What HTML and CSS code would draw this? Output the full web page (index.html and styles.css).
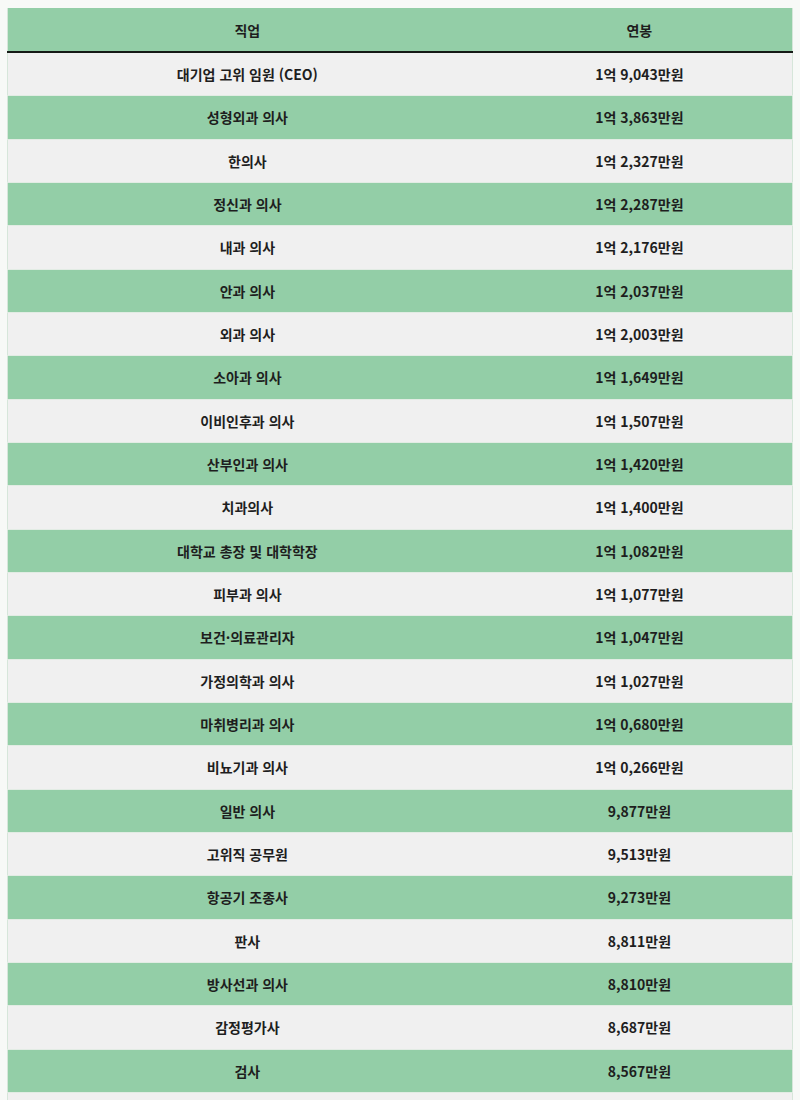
FILE: index.html
```html
<!DOCTYPE html>
<html lang="ko">
<head>
<meta charset="utf-8">
<link rel="stylesheet" href="styles.css">
</head>
<body>
<table class="salary">
<thead>
<tr><th class="c1">직업</th><th class="c2">연봉</th></tr>
</thead>
<tbody>
<tr><td>대기업 고위 임원 (CEO)</td><td>1억 9,043만원</td></tr>
<tr><td>성형외과 의사</td><td>1억 3,863만원</td></tr>
<tr><td>한의사</td><td>1억 2,327만원</td></tr>
<tr><td>정신과 의사</td><td>1억 2,287만원</td></tr>
<tr><td>내과 의사</td><td>1억 2,176만원</td></tr>
<tr><td>안과 의사</td><td>1억 2,037만원</td></tr>
<tr><td>외과 의사</td><td>1억 2,003만원</td></tr>
<tr><td>소아과 의사</td><td>1억 1,649만원</td></tr>
<tr><td>이비인후과 의사</td><td>1억 1,507만원</td></tr>
<tr><td>산부인과 의사</td><td>1억 1,420만원</td></tr>
<tr><td>치과의사</td><td>1억 1,400만원</td></tr>
<tr><td>대학교 총장 및 대학학장</td><td>1억 1,082만원</td></tr>
<tr><td>피부과 의사</td><td>1억 1,077만원</td></tr>
<tr><td>보건·의료관리자</td><td>1억 1,047만원</td></tr>
<tr><td>가정의학과 의사</td><td>1억 1,027만원</td></tr>
<tr><td>마취병리과 의사</td><td>1억 0,680만원</td></tr>
<tr><td>비뇨기과 의사</td><td>1억 0,266만원</td></tr>
<tr><td>일반 의사</td><td>9,877만원</td></tr>
<tr><td>고위직 공무원</td><td>9,513만원</td></tr>
<tr><td>항공기 조종사</td><td>9,273만원</td></tr>
<tr><td>판사</td><td>8,811만원</td></tr>
<tr><td>방사선과 의사</td><td>8,810만원</td></tr>
<tr><td>감정평가사</td><td>8,687만원</td></tr>
<tr><td>검사</td><td>8,567만원</td></tr>
<tr><td>&nbsp;</td><td>&nbsp;</td></tr>
</tbody>
</table>
</body>
</html>
```

FILE: styles.css
```css
html, body {
  margin: 0;
  padding: 0;
  background: #f7f9f7;
}
.salary {
  margin: 8px 0 0 7px;
  width: 786px;
  border-collapse: collapse;
  font-family: "Noto Sans CJK KR", "Noto Sans", sans-serif;
  font-weight: 700;
  font-size: 14px;
  color: #1e1e1e;
  border-left: 1px solid #d6e6da;
  border-right: 1px solid #d6e6da;
}
.salary th,
.salary td {
  text-align: center;
  padding: 0;
  height: 42.33px;
  line-height: 20px;
}
.salary th {
  background: #93cea7;
  height: 43px;
  border-bottom: 2px solid #151a16;
}
.c1 { width: 480px; }
.c2 { width: 306px; }
.salary tbody tr:nth-child(odd) td {
  background: #f0f0f0;
}
.salary tbody tr:nth-child(even) td {
  background: #93cea7;
}
.salary tbody td {
  border-bottom: 1px solid #e2ece4;
}
```
